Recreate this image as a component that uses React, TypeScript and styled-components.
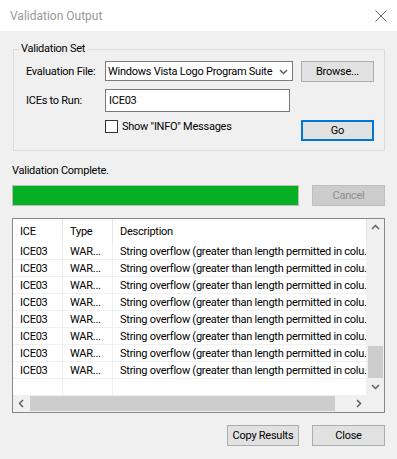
import React from "react";
import styled, { createGlobalStyle } from "styled-components";

const GlobalStyle = createGlobalStyle`
	html, body {
		margin: 0;
		padding: 0;
		background: #f0f0f0;
	}
	body {
		font-family: Roboto, "Liberation Sans", sans-serif;
		font-size: 11px;
		letter-spacing: -0.25px;
		color: #000;
	}
`;

const Window = styled.div`
	width: 397px;
	height: 459px;
	display: flex;
	flex-direction: column;
	background: #f0f0f0;
	overflow: hidden;
`;

const TitleBar = styled.div`
	height: 31px;
	flex: none;
	background: #fff;
	display: flex;
	align-items: center;
	justify-content: space-between;
	padding: 0 10px 0 10px;
	box-sizing: border-box;
	color: #999;
	font-size: 12px;
	letter-spacing: 0;
`;

const Body = styled.div`
	flex: 1;
	display: flex;
	flex-direction: column;
	padding: 0 12px 0 12px;
`;

const GroupBox = styled.fieldset`
	margin: 11px 0 0 1px;
	padding: 5px 10px 10px 12px;
	border: 1px solid #dcdcdc;
	min-width: 0;
	display: grid;
	grid-template-columns: 71px 188px 73px;
	column-gap: 8px;
	grid-template-rows: 20px 23px 20px;
	row-gap: 8px;
	align-items: center;
`;

const Legend = styled.legend`
	padding: 0 2px;
	margin-left: -7px;
	line-height: 14px;
	font-size: 11px;
`;

const Label = styled.span`
	white-space: nowrap;
`;

const Select = styled.div`
	height: 20px;
	box-sizing: border-box;
	background: #fff;
	border: 1px solid #7a7a7a;
	display: flex;
	align-items: center;
	justify-content: space-between;
	padding: 0 4px 0 2px;
	white-space: nowrap;
	overflow: hidden;
`;

const TextBox = styled.div<{ $width?: number }>`
	height: 23px;
	width: ${(p) => p.$width ?? 185}px;
	box-sizing: border-box;
	background: #fff;
	border: 1px solid #7a7a7a;
	display: flex;
	align-items: center;
	padding: 0 3px;
`;

const Button = styled.div<{ $width?: number; $focused?: boolean; $disabled?: boolean }>`
	width: ${(p) => p.$width ?? 73}px;
	height: 21px;
	box-sizing: border-box;
	display: flex;
	align-items: center;
	justify-content: center;
	background: ${(p) => (p.$disabled ? "#cccccc" : "#e1e1e1")};
	border: ${(p) => (p.$focused ? "2px solid #0078d7" : p.$disabled ? "1px solid #bfbfbf" : "1px solid #adadad")};
	color: ${(p) => (p.$disabled ? "#8d8d8d" : "#000")};
	white-space: nowrap;
`;

const CheckRow = styled.label`
	display: flex;
	align-items: center;
	gap: 4px;
	align-self: start;
	white-space: nowrap;
`;

const CheckBox = styled.span`
	width: 13px;
	height: 13px;
	box-sizing: border-box;
	background: #fff;
	border: 1px solid #333;
`;

const Status = styled.div`
	margin-top: 12px;
	height: 16px;
	line-height: 16px;
`;

const ProgressRow = styled.div`
	margin-top: 6px;
	display: flex;
	align-items: flex-start;
	justify-content: space-between;
`;

const ProgressBar = styled.div`
	width: 287px;
	height: 21px;
	box-sizing: border-box;
	border: 1px solid #bcbcbc;
	background: #e6e6e6;
	display: flex;
`;

const ProgressFill = styled.div`
	background: #06b025;
	height: 100%;
`;

const List = styled.div`
	margin-top: 12px;
	height: 195px;
	border: 1px solid #828790;
	background: #fff;
	display: grid;
	grid-template-columns: 1fr 17px;
	grid-template-rows: 1fr 17px;
	box-sizing: border-box;
`;

const Table = styled.div`
	overflow: hidden;
	display: grid;
	grid-template-columns: 50px 50px 1fr;
	grid-auto-rows: 17px;
	grid-template-rows: 24px;
	align-content: start;
`;

const HeadCell = styled.div`
	display: flex;
	align-items: center;
	padding-left: 7px;
	border-right: 1px solid #e5e5e5;
	white-space: nowrap;
	overflow: hidden;
`;

const Cell = styled.div<{ $empty?: boolean }>`
	display: flex;
	align-items: center;
	padding-left: 7px;
	border-right: 1px solid #f0f0f0;
	border-bottom: ${(p) => (p.$empty ? "none" : "1px solid #f0f0f0")};
	box-sizing: border-box;
	white-space: nowrap;
	overflow: hidden;
`;

const VScroll = styled.div`
	background: #f0f0f0;
	display: flex;
	flex-direction: column;
`;

const HScroll = styled.div`
	background: #f0f0f0;
	display: flex;
`;

const ArrowButton = styled.div`
	width: 17px;
	height: 17px;
	flex: none;
	display: flex;
	align-items: center;
	justify-content: center;
`;

const Track = styled.div<{ $vertical?: boolean }>`
	flex: 1;
	display: flex;
	flex-direction: ${(p) => (p.$vertical ? "column" : "row")};
	justify-content: ${(p) => (p.$vertical ? "flex-end" : "flex-start")};
	padding: ${(p) => (p.$vertical ? "0 1px" : "1px 0")};
`;

const Thumb = styled.div<{ $size: number; $vertical?: boolean }>`
	background: #cdcdcd;
	${(p) => (p.$vertical ? `height: ${p.$size}px;` : `width: ${p.$size}px;`)}
	flex: none;
`;

const Corner = styled.div`
	background: #f0f0f0;
`;

const Footer = styled.div`
	margin-top: 12px;
	display: flex;
	justify-content: flex-end;
	gap: 13px;
`;

function Chevron({ dir }: { dir: "up" | "down" | "left" | "right" }) {
	const points = {
		up: "1,6 4.5,2.5 8,6",
		down: "1,3 4.5,6.5 8,3",
		left: "6,1 2.5,4.5 6,8",
		right: "3,1 6.5,4.5 3,8",
	}[dir];
	return (
		<svg width="9" height="9" viewBox="0 0 9 9">
			<polyline points={points} fill="none" stroke="#606060" strokeWidth="1.5" />
		</svg>
	);
}

const rows = Array.from({ length: 8 }, () => ({
	ice: "ICE03",
	type: "WAR...",
	desc: "String overflow (greater than length permitted in colu.",
}));

export default function App() {
	return (
		<Window>
			<GlobalStyle />
			<TitleBar>
				<span>Validation Output</span>
				<svg width="12" height="12" viewBox="0 0 12 12">
					<path d="M0.5 0.5 L11.5 11.5 M11.5 0.5 L0.5 11.5" stroke="#666" strokeWidth="1" />
				</svg>
			</TitleBar>
			<Body>
				<GroupBox>
					<Legend>Validation Set</Legend>
					<Label>Evaluation File:</Label>
					<Select>
						<span>Windows Vista Logo Program Suite</span>
						<Chevron dir="down" />
					</Select>
					<Button>Browse...</Button>
					<Label>ICEs to Run:</Label>
					<TextBox>ICE03</TextBox>
					<span />
					<span />
					<CheckRow>
						<CheckBox />
						Show "INFO" Messages
					</CheckRow>
					<Button $focused>Go</Button>
				</GroupBox>
				<Status>Validation Complete.</Status>
				<ProgressRow>
					<ProgressBar>
						<ProgressFill style={{ width: "100%" }} />
					</ProgressBar>
					<Button $disabled>Cancel</Button>
				</ProgressRow>
				<List>
					<Table>
						<HeadCell>ICE</HeadCell>
						<HeadCell>Type</HeadCell>
						<HeadCell>Description</HeadCell>
						{rows.map((r, i) => (
							<React.Fragment key={i}>
								<Cell>{r.ice}</Cell>
								<Cell>{r.type}</Cell>
								<Cell>{r.desc}</Cell>
							</React.Fragment>
						))}
						<Cell $empty />
						<Cell $empty />
						<Cell $empty />
					</Table>
					<VScroll>
						<ArrowButton><Chevron dir="up" /></ArrowButton>
						<Track $vertical>
							<Thumb $vertical $size={32} />
						</Track>
						<ArrowButton><Chevron dir="down" /></ArrowButton>
					</VScroll>
					<HScroll>
						<ArrowButton><Chevron dir="left" /></ArrowButton>
						<Track>
							<Thumb $size={305} />
						</Track>
						<ArrowButton><Chevron dir="right" /></ArrowButton>
					</HScroll>
					<Corner />
				</List>
				<Footer>
					<Button $width={72}>Copy Results</Button>
					<Button>Close</Button>
				</Footer>
			</Body>
		</Window>
	);
}
